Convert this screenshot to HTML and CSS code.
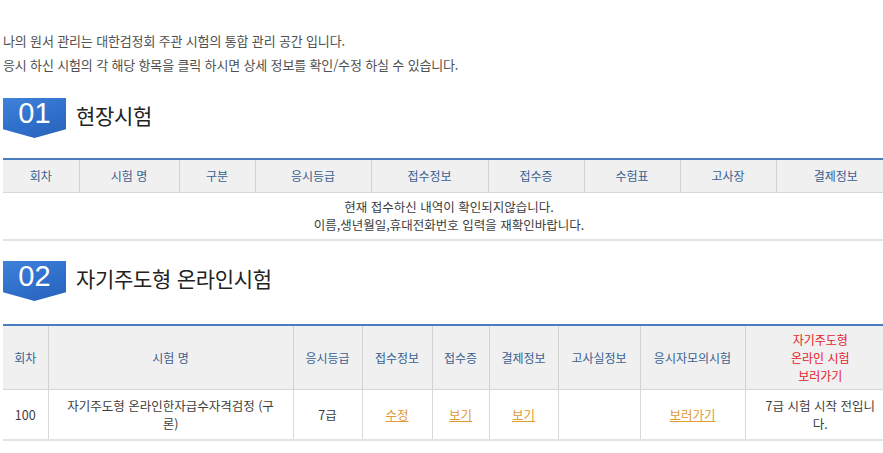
FILE: index.html
```html
<!DOCTYPE html>
<html lang="ko">
<head>
<meta charset="utf-8">
<title>나의 원서 관리</title>
<link rel="stylesheet" href="styles.css">
</head>
<body>
<div class="page">
  <div class="intro">
    <p>나의 원서 관리는 대한검정회 주관 시험의 통합 관리 공간 입니다.</p>
    <p>응시 하신 시험의 각 해당 항목을 클릭 하시면 상세 정보를 확인/수정 하실 수 있습니다.</p>
  </div>

  <div class="section-title">
    <div class="badge"><span>01</span></div>
    <h2>현장시험</h2>
  </div>
  <table class="grid grid-one">
    <colgroup>
      <col class="c76"><col class="c100"><col class="c76"><col class="c116"><col class="c117"><col class="c96"><col class="c96"><col class="c96"><col class="c119">
    </colgroup>
    <thead>
      <tr><th>회차</th><th>시험 명</th><th>구분</th><th>응시등급</th><th>접수정보</th><th>접수증</th><th>수험표</th><th>고사장</th><th>결제정보</th></tr>
    </thead>
    <tbody>
      <tr><td colspan="9" class="empty">현재 접수하신 내역이 확인되지않습니다.<br>이름,생년월일,휴대전화번호 입력을 재확인바랍니다.</td></tr>
    </tbody>
  </table>

  <div class="section-title second">
    <div class="badge"><span>02</span></div>
    <h2>자기주도형 온라인시험</h2>
  </div>
  <table class="grid grid-two">
    <colgroup>
      <col class="c45"><col class="c245"><col class="c69"><col class="c70"><col class="c57"><col class="c69"><col class="c82"><col class="c105"><col class="c150">
    </colgroup>
    <thead>
      <tr><th>회차</th><th>시험 명</th><th>응시등급</th><th>접수정보</th><th>접수증</th><th>결제정보</th><th>고사실정보</th><th>응시자모의시험</th><th class="red">자기주도형<br>온라인 시험<br>보러가기</th></tr>
    </thead>
    <tbody>
      <tr>
        <td>100</td>
        <td>자기주도형 온라인한자급수자격검정 (구<br>론)</td>
        <td>7급</td>
        <td><a href="#">수정</a></td>
        <td><a href="#">보기</a></td>
        <td><a href="#">보기</a></td>
        <td></td>
        <td><a href="#">보러가기</a></td>
        <td>7급 시험 시작 전입니<br>다.</td>
      </tr>
    </tbody>
  </table>
</div>
</body>
</html>
```
FILE: styles.css
```css
html, body {
  margin: 0;
  padding: 0;
  background: #fff;
  overflow-x: hidden;
}
body {
  font-family: "Noto Sans CJK KR", "Noto Sans", sans-serif;
  color: #444;
}
.page {
  padding: 29px 0 0 3px;
  width: 892px;
}
.intro p {
  margin: 0;
  font-size: 13px;
  line-height: 24px;
  color: #505050;
  letter-spacing: -0.15px;
}
.section-title {
  display: flex;
  align-items: flex-start;
  margin-top: 21px;
  height: 40px;
}
.section-title.second {
  margin-top: 20px;
}
.badge {
  width: 63px;
  height: 40px;
  background: linear-gradient(160deg, #3f82d9 0%, #2f6fcb 55%, #2862b8 100%);
  clip-path: polygon(0 0, 100% 0, 100% 78%, 50% 100%, 0 78%);
  display: flex;
  justify-content: center;
}
.badge span {
  color: #fff;
  font-family: "Liberation Sans", Arial, sans-serif;
  font-size: 29px;
  line-height: 31px;
}
.section-title h2 {
  margin: 0 0 0 10px;
  font-size: 21px;
  font-weight: normal;
  line-height: 34px;
  color: #222;
  letter-spacing: -0.3px;
}
.grid {
  width: 892px;
  table-layout: fixed;
  border-collapse: collapse;
  border-top: 2px solid #4a7cbf;
  margin-top: 20px;
  font-size: 12px;
}
.grid-two {
  margin-top: 23px;
}
.grid th {
  background: #f0f0f0;
  color: #3a5f8f;
  font-weight: normal;
  border-left: 1px solid #d2d2d2;
  border-bottom: 1px solid #d8d8d8;
  padding: 0 4px;
  line-height: 18px;
}
.grid th:first-child {
  border-left: none;
}
.grid-one th {
  height: 32px;
}
.grid-two th {
  height: 63px;
}
.grid th.red {
  color: #e3222a;
}
.grid td {
  text-align: center;
  color: #3d3d3d;
  font-size: 12.5px;
  border-bottom: 2px solid #e2e2e2;
  border-left: 1px solid #d8d8d8;
  line-height: 18px;
  padding: 0 4px;
}
.grid td:first-child {
  border-left: none;
}
.grid td.empty {
  height: 46px;
}
.grid-two td {
  height: 49px;
}
.grid a {
  color: #e29a34;
  text-decoration: underline;
}
.c45 { width: 45px; }
.c57 { width: 57px; }
.c69 { width: 69px; }
.c70 { width: 70px; }
.c76 { width: 76px; }
.c82 { width: 82px; }
.c96 { width: 96px; }
.c100 { width: 100px; }
.c105 { width: 105px; }
.c116 { width: 116px; }
.c117 { width: 117px; }
.c119 { width: 119px; }
.c150 { width: 150px; }
.c245 { width: 245px; }
```
